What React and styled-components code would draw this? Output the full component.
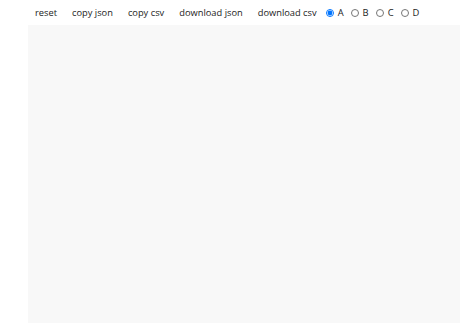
import React, { useState } from 'react';
import styled, { createGlobalStyle } from 'styled-components';

const GlobalStyle = createGlobalStyle`
  html, body {
    margin: 0;
    padding: 0;
    background: #fff;
    font-family: "Open Sans", "Noto Sans", sans-serif;
  }
`;

const Page = styled.div`
  padding: 0 14px 3px 28px;
  box-sizing: border-box;
  height: 326px;
  display: flex;
  flex-direction: column;
`;

const Toolbar = styled.div`
  display: flex;
  align-items: center;
  height: 25px;
  white-space: nowrap;
`;

const ToolButton = styled.button`
  flex-shrink: 0;
  background: none;
  border: none;
  padding: 0 7px;
  margin-right: 1px;
  font-family: inherit;
  font-size: 9.3px;
  color: #222;
  cursor: pointer;
  white-space: nowrap;
`;

const RadioLabel = styled.label`
  flex-shrink: 0;
  display: flex;
  align-items: center;
  font-size: 9.4px;
  color: #222;
  margin-right: 6px;
  input {
    width: 8px;
    height: 8px;
    margin: 0 4px 0 1px;
  }
`;

const Canvas = styled.div`
  flex: 1;
  background: #f8f8f8;
`;

export default function App() {
  const [mode, setMode] = useState('A');
  return (
    <>
      <GlobalStyle />
      <Page>
        <Toolbar>
          <ToolButton>reset</ToolButton>
          <ToolButton>copy json</ToolButton>
          <ToolButton>copy csv</ToolButton>
          <ToolButton>download json</ToolButton>
          <ToolButton>download csv</ToolButton>
          {['A', 'B', 'C', 'D'].map((m) => (
            <RadioLabel key={m}>
              <input
                type="radio"
                name="mode"
                checked={mode === m}
                onChange={() => setMode(m)}
              />
              {m}
            </RadioLabel>
          ))}
        </Toolbar>
        <Canvas />
      </Page>
    </>
  );
}
